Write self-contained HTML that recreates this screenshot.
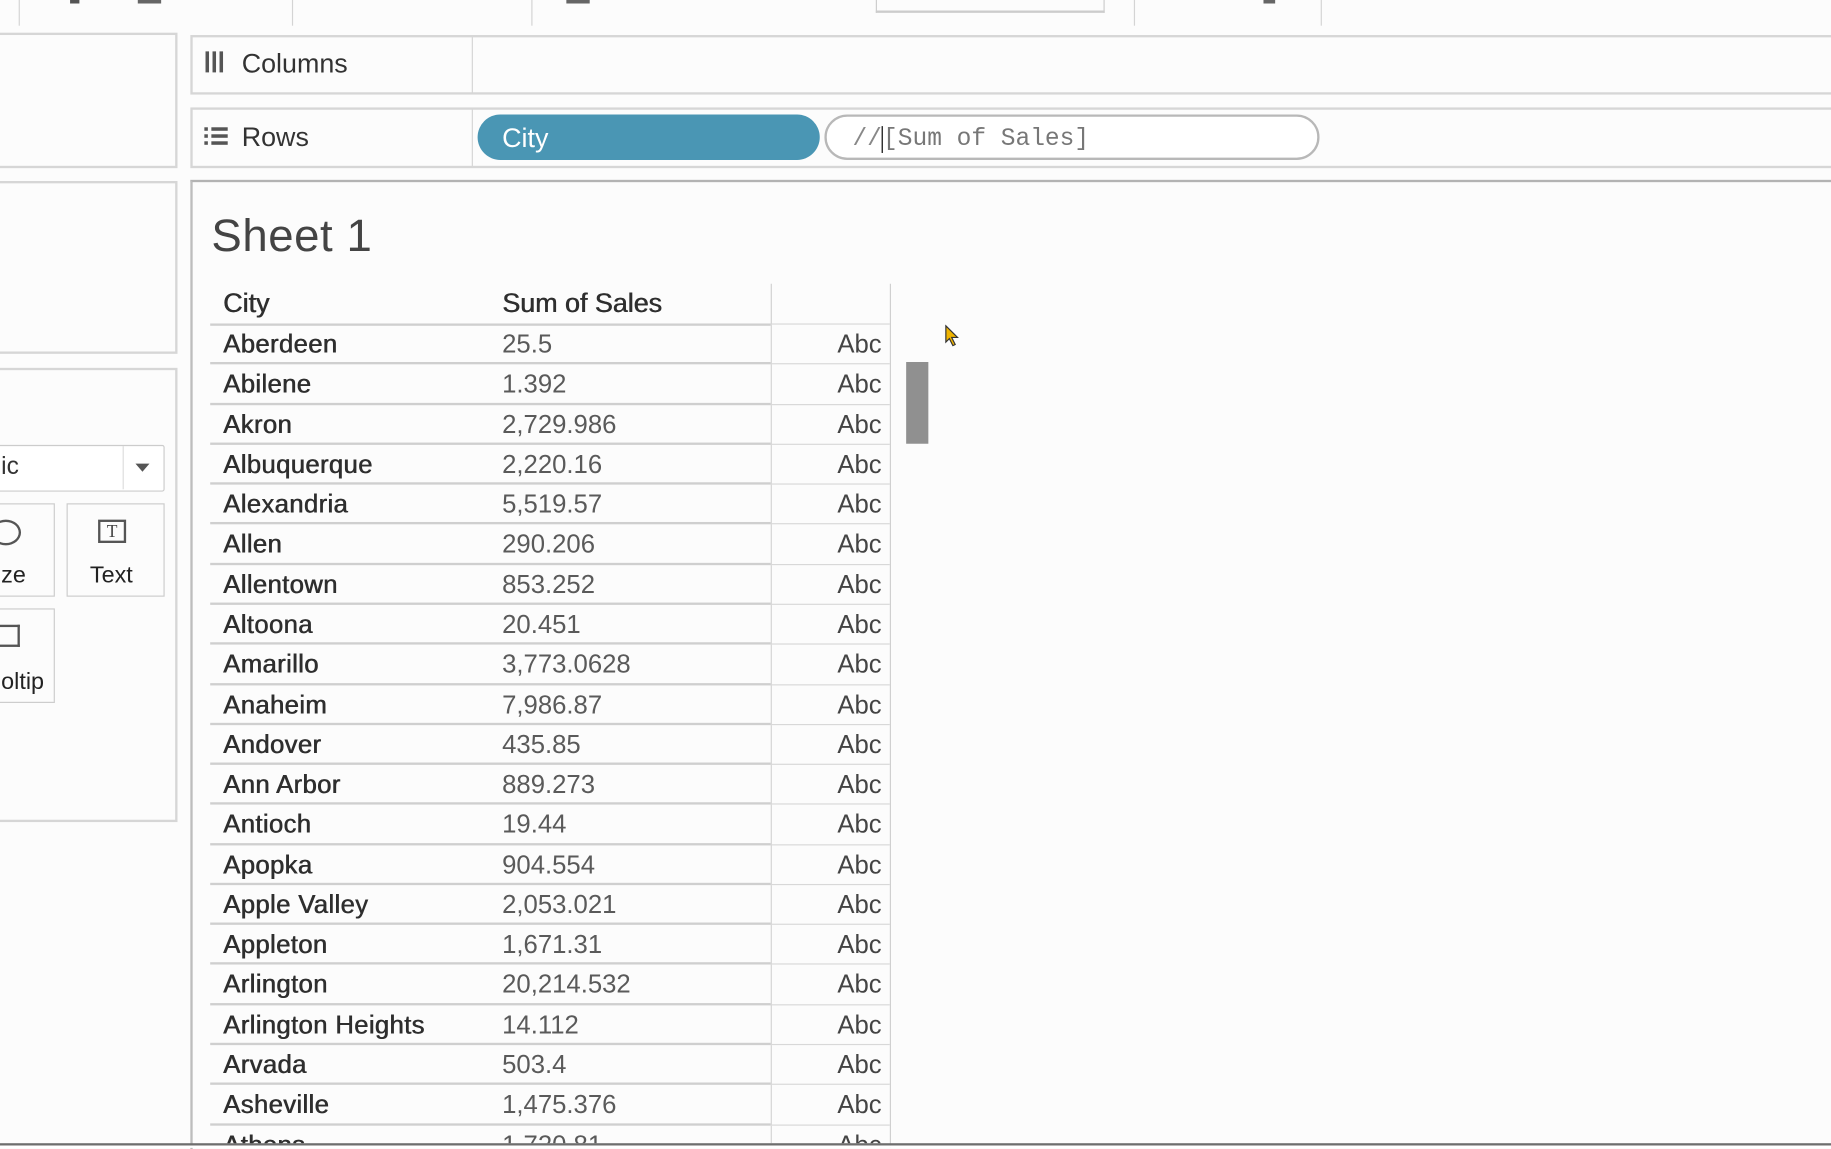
<!DOCTYPE html>
<html><head><meta charset="utf-8"><style>
html,body{margin:0;padding:0;width:1831px;height:1145px;overflow:hidden;background:#fcfcfc;font-family:"Liberation Sans",sans-serif}
#w{position:absolute;left:0;top:0;width:1568px;height:981px;transform:scale(1.16773);transform-origin:0 0;background:#fcfcfc}
.a{position:absolute}
.sep{position:absolute;top:0;width:1px;height:22px;background:#d4d4d4}
.box{position:absolute;border:2px solid #d6d6d6;box-sizing:border-box;background:#fcfcfc}
.r{position:absolute;left:180px;width:582px;height:34.3px;font-size:22px;line-height:34px}
.r .c{position:absolute;left:11px;color:#2e2e2e;letter-spacing:.3px;text-shadow:0.5px 0 0 #2e2e2e;white-space:nowrap}
.r .v{position:absolute;left:250px;color:#5a5a5a;white-space:nowrap}
.r .x{position:absolute;right:7px;color:#444}
.r .l{position:absolute;left:0;right:102px;bottom:0;height:2px;background:#cfcfcf}
.r .l2{position:absolute;right:0;width:102px;bottom:0;height:1px;background:#d8d8d8}
.r .d{position:absolute;left:480px;top:0;width:1px;height:100%;background:#d4d4d4}
.hd{position:absolute;top:246px;font-size:23px;color:#2e2e2e;text-shadow:0.5px 0 0 #2e2e2e}
</style></head><body><div id="w">
<div class="sep" style="left:16px"></div><div class="sep" style="left:250px"></div><div class="sep" style="left:455px"></div><div class="sep" style="left:971px"></div><div class="sep" style="left:1131px"></div>
<div class="a" style="left:750px;top:0;width:194px;height:9px;border:1px solid #ccc;border-top:none;border-bottom:2px solid #ccc"></div>
<div class="a" style="left:60px;top:0;width:8px;height:3px;background:#555"></div>
<div class="a" style="left:118px;top:0;width:20px;height:3px;background:#666"></div>
<div class="a" style="left:485px;top:0;width:20px;height:3px;background:#666"></div>
<div class="a" style="left:1082px;top:0;width:10px;height:3px;background:#666"></div>
<div class="box" style="left:-2px;top:28px;width:154px;height:116px"></div>
<div class="box" style="left:-2px;top:155px;width:154px;height:148px"></div>
<div class="box" style="left:-2px;top:315px;width:154px;height:389px"></div>
<div class="a" style="left:-2px;top:381px;width:141px;height:38px;border:1px solid #ccc;border-radius:2px;background:#fff"></div>
<div class="a" style="left:105px;top:382px;width:1px;height:37px;background:#ddd"></div>
<div class="a" style="left:116px;top:397px;width:0;height:0;border-left:6px solid transparent;border-right:6px solid transparent;border-top:7px solid #555"></div>
<div class="a" style="left:1px;top:388px;font-size:21px;color:#333">ic</div>
<div class="a" style="left:-2px;top:431px;width:47px;height:78px;border:1px solid #ccc"></div>
<div class="a" style="left:57px;top:431px;width:82px;height:78px;border:1px solid #ccc"></div>
<div class="a" style="left:-2px;top:521px;width:47px;height:79px;border:1px solid #ccc"></div>
<div class="a" style="left:1px;top:482px;font-size:20px;color:#222">ze</div>
<div class="a" style="left:77px;top:482px;font-size:20px;color:#222">Text</div>
<div class="a" style="left:1px;top:573px;font-size:20px;color:#222">oltip</div>
<div class="a" style="left:-8px;top:445px;width:22px;height:18px;border:2px solid #555;border-radius:50%"></div>
<div class="a" style="left:84px;top:445px;width:24px;height:20px;border:2px solid #555;font-family:'Liberation Serif',serif;font-size:15px;line-height:18px;text-align:center;color:#444;box-sizing:border-box">T</div>
<div class="a" style="left:-4px;top:535px;width:19px;height:15px;border:2px solid #555;border-left:none"></div>
<div class="box" style="left:163px;top:30px;width:1410px;height:51px"></div>
<div class="a" style="left:404px;top:31px;width:1px;height:49px;background:#d6d6d6"></div>
<div class="a" style="left:176px;top:44px;width:3px;height:18px;background:#555;box-shadow:6px 0 #555,12px 0 #555"></div>
<div class="a" style="left:207px;top:41px;font-size:23px;color:#333">Columns</div>
<div class="box" style="left:163px;top:92px;width:1410px;height:52px"></div>
<div class="a" style="left:404px;top:93px;width:1px;height:50px;background:#d6d6d6"></div>
<div class="a" style="left:175px;top:109px;width:3px;height:3px;background:#555;box-shadow:0 6px #555,0 12px #555"></div>
<div class="a" style="left:181px;top:109px;width:14px;height:3px;background:#555;box-shadow:0 6px #555,0 12px #555"></div>
<div class="a" style="left:207px;top:104px;font-size:23px;color:#333">Rows</div>
<div class="a" style="left:409px;top:98px;width:293px;height:39px;border-radius:20px;background:#4a96b4;color:#fff;font-size:23px;line-height:40px;padding-left:21px;box-sizing:border-box">City</div>
<div class="a" style="left:706px;top:98px;width:424px;height:39px;border-radius:20px;border:2px solid #b8b8b8;box-sizing:border-box;background:#fff;font-family:'Liberation Mono',monospace;font-size:21px;line-height:40px;color:#888;padding-left:22px;white-space:pre">//<span style="border-left:1.5px solid #000;color:#777">[Sum of Sales]</span></div>
<div class="a" style="left:163px;top:154px;width:1410px;height:830px;border-left:2px solid #bdbdbd;border-top:2px solid #b3b3b3;box-sizing:border-box"></div>
<div class="a" style="left:181px;top:181px;font-size:39px;color:#444;letter-spacing:.5px">Sheet 1</div>
<div class="a" style="left:660px;top:243px;width:1px;height:35px;background:#d0d0d0"></div>
<div class="a" style="left:762px;top:243px;width:1px;height:740px;background:#d0d0d0"></div>
<div class="hd" style="left:191px">City</div>
<div class="hd" style="left:430px">Sum of Sales</div>
<div class="a" style="left:180px;top:277px;width:480px;height:2px;background:#cfcfcf"></div>
<div class="a" style="left:660px;top:277px;width:102px;height:1px;background:#d8d8d8"></div>
<div class="a" style="left:776px;top:310px;width:19px;height:70px;background:#909090"></div>
<svg class="a" style="left:808px;top:278px" width="14" height="20"><path d="M2 1 L2 15 L5 12 L8 18 L10 17 L7 11 L12 11 Z" fill="#f0b400" stroke="#333" stroke-width="1"/></svg>
<div id="rows"></div>
<div class="a" style="left:0;top:979px;width:1568px;height:2px;background:#6e6e6e"></div>
<div class="a" style="left:0;top:981px;width:1568px;height:2px;background:#fff"></div>
</div>
<script>
var d=[["Aberdeen","25.5"],["Abilene","1.392"],["Akron","2,729.986"],["Albuquerque","2,220.16"],["Alexandria","5,519.57"],["Allen","290.206"],["Allentown","853.252"],["Altoona","20.451"],["Amarillo","3,773.0628"],["Anaheim","7,986.87"],["Andover","435.85"],["Ann Arbor","889.273"],["Antioch","19.44"],["Apopka","904.554"],["Apple Valley","2,053.021"],["Appleton","1,671.31"],["Arlington","20,214.532"],["Arlington Heights","14.112"],["Arvada","503.4"],["Asheville","1,475.376"],["Athens","1,720.81"]];
var h="";d.forEach(function(r,i){var t=278+i*34.28;h+='<div class="r" style="top:'+t+'px;'+(i==20?'height:'+(979-t)+'px;overflow:hidden':'')+'"><span class="c">'+r[0]+'</span><span class="v">'+r[1]+'</span><span class="x">Abc</span><div class="d"></div>'+(i<20?'<div class="l"></div><div class="l2"></div>':'')+'</div>';});
document.getElementById("rows").outerHTML=h;
</script>
</body></html>
